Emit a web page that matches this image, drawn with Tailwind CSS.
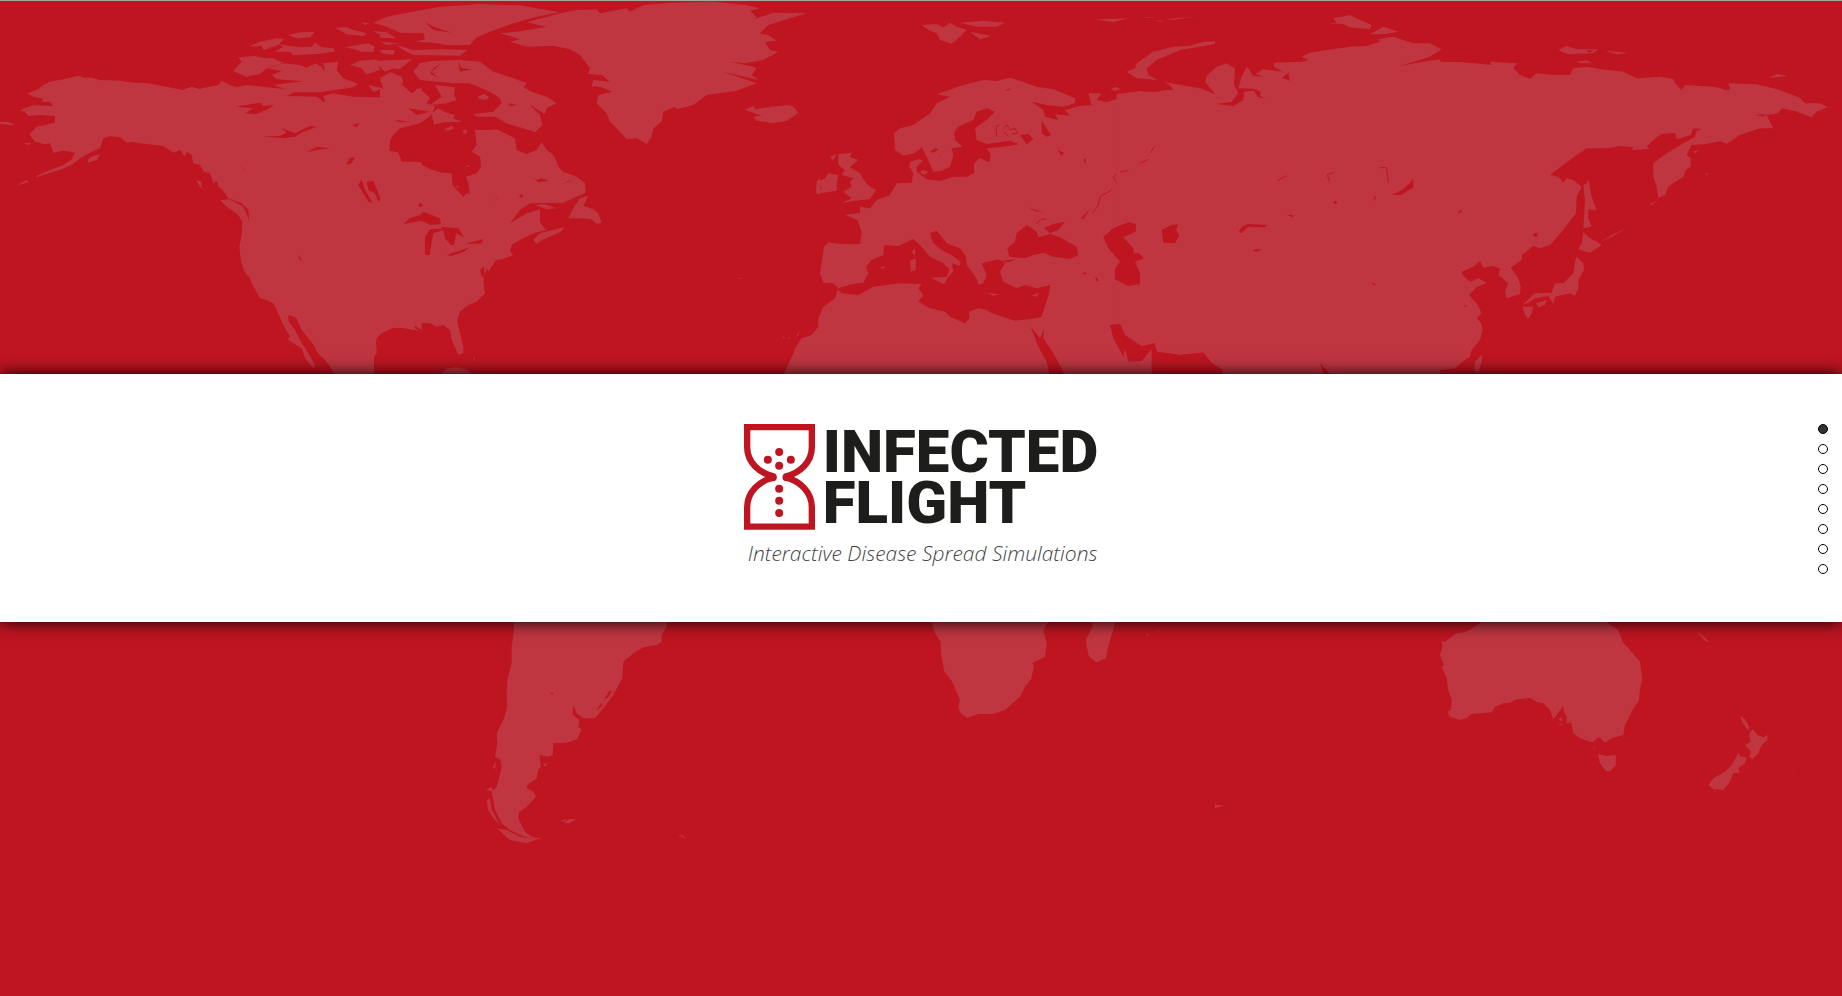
<!DOCTYPE html>
<html lang="en">
<head>
    <meta charset="UTF-8">
    <meta name="viewport" content="width=device-width, initial-scale=1.0">
    <title>Infected Flight</title>
    <script src="https://cdn.jsdelivr.net/npm/@tailwindcss/browser@4"></script>
</head>
<body class="bg-[#be1521]">
    <main class="relative flex min-h-screen flex-col justify-center overflow-hidden">

        <!-- World map -->
        <svg class="absolute inset-0 h-full w-full" viewBox="0 0 5526 2988" preserveAspectRatio="xMidYMid slice" fill="#bf3641" aria-hidden="true">
            <!-- North America, west -->
            <g>
                <path d="M82,280L115,268 130,255 150,245 190,238 235,227 255,234 270,232 300,240 360,242 400,248 440,249 500,260 548,270 575,260 600,268 640,250 605,265 655,255 665,242 690,255 710,262 740,255 800,262 860,268 885,275 860,288 950,290 975,308 970,288 1000,280 1060,290 1120,292 1150,292 1155,305 1165,285 1200,265 1235,280 1265,262V360L1225,375 1190,390 1170,420 1168,452 1195,458 1205,485 1265,487V990L1245,978 1235,990 1220,983 1180,983 1145,1000 1130,1015 1128,1030 1130,1060 1122,1070V1125H1005L990,1100 975,1080 950,1055 945,1040 925,1015 905,990 890,955 865,945 866,965 885,990 900,1020 925,1060 945,1095 940,1105 915,1075 905,1045 880,1030 862,1018 870,1010 850,975 830,930 820,910 800,900 780,895 760,860 750,835 733,815 722,780 718,740 726,700 727,665 715,645 680,620 660,600 690,598 730,620 748,662 745,630 725,610 685,595 668,570 655,560 652,545 640,548 630,520 612,515 600,495 580,490 575,465 560,455 555,470 540,450 520,458 490,438 440,432 415,430 400,425 380,428 360,412 330,408 310,415 300,445 275,455 240,475 215,495 180,510 150,518 110,532 108,528 150,510 190,495 215,478 225,458 190,452 160,458 150,430 135,433 105,425 88,403 110,380 165,368 165,348 120,345 85,348 75,335 60,330 100,316 160,318 150,306 125,305 130,297 100,290Z"/>
                <path d="M262,480L275,470 300,462 290,480 265,488Z M47,558L80,540 85,547 65,552Z M0,366L25,366 47,374 30,375 0,371Z M70,430L95,428 85,436Z M588,540L605,545 603,560 617,574 600,562Z"/>
                <path d="M700,213L725,185 715,172 765,168 795,175 820,175 850,188 800,205 780,222 740,230Z M803,205L850,190 900,195 920,203 945,190 965,200 975,218 970,190 1015,185 1010,210 1030,235 1075,252 1060,262 1020,268 960,277 880,277 840,262 820,255 910,244 830,238 815,225 845,213Z"/>
                <path d="M745,140L780,125 830,115 852,117 835,135 790,150 785,138Z M825,155L850,140 835,133 900,142 935,140 945,128 965,142 1000,145 1005,155 950,162 880,166 870,155Z M865,105L900,97 945,95 930,112 890,115Z M1005,83L1040,82 1060,90 1100,100 1090,108 1040,103Z M1035,142L1070,135 1105,130 1125,140 1120,155 1085,155 1060,148Z M1050,195L1080,182 1130,178 1140,210 1100,223 1085,205Z M1155,182L1235,178 1200,208 1165,205Z M1140,235L1170,217 1205,230 1210,245 1175,262 1150,250Z M1117,92L1165,98 1150,108Z M1105,255L1150,265 1120,277Z M1085,67L1107,70 1095,75Z"/>
                <g fill="#be1521">
                    <path d="M707,320L780,308 790,318 822,315 800,330 765,343 735,340 760,325Z M790,409L840,408 860,398 845,385 885,400 930,378 950,381 910,395 885,410 850,415Z M920,457L950,440 990,445 950,450Z M1038,495L1048,475 1065,472 1055,490Z M1057,375L1078,368 1070,382Z M1075,555L1085,538 1095,570 1118,608 1105,605Z M1100,545L1120,543 1143,600 1135,605 1125,580 1105,570Z M1160,630L1178,620 1175,633Z M893,766L905,778 900,782Z M1210,672L1235,655 1262,643V672Z M720,497L738,515 730,510Z"/>
                    <path d="M1183,360L1262,362 1230,378Z M1220,325L1262,328V336Z"/>
                </g>
            </g>

            <!-- North America, east and Greenland -->
            <g transform="translate(1140 0)">
                <path d="M0,270L20,262 40,260 60,250 90,275 100,285 110,265 130,275 150,295 140,310 165,318 155,345 120,370 60,385 30,415 27,452 55,458 65,485 110,485 150,508 185,518 215,520 218,555 240,580 250,590 262,578 270,585 265,550 258,530 290,520 303,500 300,470 275,455 290,435 285,390 330,390 350,388 375,400 405,415 410,450 440,462 470,450 485,427 500,450 520,465 530,485 535,500 550,515 590,530 615,548 617,578 590,590 550,608 450,610 420,630 390,670 440,640 480,628 490,640 480,665 500,690 460,700 410,725 395,735 390,755 400,765 345,785 325,815 320,805 310,845 315,880 290,905 265,915 240,935 232,960 240,1000 250,1040 250,1060 235,1064 215,1020 210,990 190,975 170,980 150,970 130,968 95,975 115,992 90,988 60,983 30,983 0,1003Z"/>
                <path d="M100,215L120,190 160,182 240,180 300,185 340,215 400,235 440,250 430,262 455,275 500,290 530,310 500,325 495,342 450,315 480,345 487,375 465,397 430,385 380,370 345,350 290,350 280,342 340,335 365,310 360,295 330,275 290,258 265,250 220,250 170,245 120,240Z"/>
                <path d="M-20,68L20,50 80,38 180,20 300,12 420,16 540,37 480,48 400,70 330,95 290,112 270,135 200,135 160,128 105,125 135,118 130,100 60,98 20,80Z M48,135L100,150 180,148 262,150 240,167 100,165 70,150Z M0,125L60,130 20,135Z M0,150L45,150 40,165 5,160Z M-20,182L90,180 40,205 15,215Z M0,240L40,220 70,250 40,275 10,265Z M0,95L20,97 50,115 0,113Z"/>
                <path d="M155,340L175,325 200,338 225,345 220,355 245,365 190,367 162,374Z M293,290L310,282 328,290 318,300 300,298Z M193,388L215,378 222,385 205,392Z M247,392L258,388 262,398 252,402Z M165,255L225,262 222,285 230,300 200,310 150,315 185,290Z"/>
                <path d="M565,655L580,625 600,595 625,587 610,618 640,628 655,640 665,668 650,672 635,658 600,655Z M460,720L480,700 545,683 555,680 540,697 485,720 470,732Z M462,614L495,613 528,625 500,627Z"/>
                <path d="M360,100L430,92 500,80 440,67 530,42 590,30 650,28 660,40 740,25 750,35 790,15 880,8 1000,5 1100,15 1140,25 1110,33 1130,50 1120,58 1180,38 1280,40 1220,58 1165,75 1140,100 1165,105 1190,122 1155,125 1170,150 1195,155 1150,180 1095,190 1050,185 1120,200 1130,205 1115,225 1135,240 1030,215 1130,250 1070,272 980,285 940,315 890,328 885,320 850,335 845,365 820,385 815,410 800,432 770,415 740,417 710,385 690,365 680,340 650,310 655,285 695,275 665,262 635,258 640,240 690,245 665,225 625,222 630,205 600,165 570,148 520,137 440,140 390,125 420,118Z"/>
                <path d="M1095,330L1120,317 1125,328 1160,322 1190,325 1215,315 1240,320 1255,338 1220,362 1180,370 1130,362 1120,350 1145,347Z M1070,834L1085,833 1080,837Z M1310,545L1320,535V585L1308,578Z M185,1122L200,1106 225,1102 260,1108 275,1122Z M278,1065L288,1085 282,1080Z"/>
                <g fill="#be1521">
                    <path d="M70,672L90,655 120,645 130,635 180,655 183,672 150,675 125,662Z M135,765L135,710 150,688 235,683 252,712 228,700 222,735 212,735 195,715 190,690 160,700 152,745 150,765Z M200,765L270,742 250,755 215,768Z M255,733L310,717 305,730Z M182,680L235,685 190,690Z"/>
                    <path d="M480,630L530,628 540,640 515,650 545,672 520,690 495,688 480,665Z M417,585L430,583 425,595Z M455,530L470,540 485,535 505,542 475,547Z M550,553L590,533 560,545Z M340,605L360,590 348,597Z M115,615L122,608 130,617 120,622Z M300,810L312,800 315,835 305,830Z M85,325L150,335 110,345Z M45,360L95,365 60,367Z M160,205L185,188 155,215 175,235 150,220Z M235,183L245,205 275,208 240,215Z M135,65L160,80 215,98 160,90Z M345,780L370,776 350,783Z M390,310L410,315 385,318Z"/>
                </g>
                <path d="M255,502L265,495 268,500Z M225,557L240,560 232,563Z"/>
            </g>

            <!-- Europe and north Africa -->
            <g transform="translate(2310 0)">
                <path d="M40,1125L70,1060 75,1045 95,1015 125,1005 145,980 145,955 160,920 195,895 205,865 190,850 160,848 150,820 162,740 175,727 210,732 270,733 275,695 262,660 225,645 270,638 270,620 300,625 320,600 360,585 380,550 425,548 430,520 418,500 420,485 440,480 455,445 432,460 400,467 375,450 372,400 390,385 430,375 480,340 500,310 540,290 500,283 530,272 580,255 640,240 680,243 720,233 760,245 800,260 850,268 880,280 915,295 915,310 880,320 830,315 785,305 820,330 825,350 865,360 855,343 900,347 885,330 930,318 965,315 955,280 995,280 980,300 1010,307 1050,293 1090,280 1105,272 1145,280V1125Z"/>
                <path d="M215,610L245,595 220,575 245,560 240,545 250,535 215,525 225,510 205,495 205,462 245,458 240,470 265,480 240,502 270,520 285,545 300,560 318,570 300,598 250,602Z M138,582L155,565 142,545 165,535 175,520 205,525 200,550 200,572Z M455,75L500,72 520,82 540,68 560,80 590,90 570,110 545,131 510,120 500,100 475,90Z M570,68L640,62 705,68 680,80 620,80Z M600,95L665,108 630,118Z M978,58L1030,57 1075,54 1030,67Z M1022,268L1035,260 1053,267 1035,273Z M180,470L200,462 188,482Z M0,42L105,40 40,58 0,72Z M0,320L60,316 85,338 50,362 0,370Z M40,1008L45,1015 38,1012Z M53,1013L60,1013 57,1018Z M80,1005L90,993 83,1008Z"/>
                <g fill="#be1521">
                    <path d="M432,478L455,440 470,470 490,515 515,513 540,500 550,465 545,445 578,440 555,420 553,395 565,380 610,360 620,335 650,325 675,335 650,360 615,385 620,420 650,432 720,422 747,433 700,440 650,445 662,465 658,487 630,475 612,490 612,520 590,530 550,530 510,543 470,538 440,515 440,500 460,480Z"/>
                    <path d="M203,868L213,862 250,852 280,848 295,820 288,800 305,780 340,765 342,735 385,738 430,717 470,750 490,730 478,700 500,692 530,730 570,745 587,768 590,795 620,835 625,855 640,850 650,825 635,790 685,778 705,790 690,815 700,845 740,865 765,855 800,865 840,855 837,880 815,950 780,958 735,962 665,940 650,930 625,925 597,935 598,955 585,970 540,950 525,935 480,925 445,905 460,885 445,865 455,852 390,850 310,860 265,885 215,880Z"/>
                    <path d="M740,700L770,675 785,685 800,695 805,712 840,702 870,712 920,740 925,765 900,777 850,770 820,758 790,765 765,775 718,770 712,745 735,725Z M822,685L850,672 885,665 865,690 840,700Z M690,783L740,778 715,787Z"/>
                    <path d="M782,980L810,1015 822,988 820,1015 850,1060 885,1125H840L830,1085 805,1040Z M750,405L775,402 790,418 770,433Z M815,362L830,385 843,405 830,410 815,400Z M480,455L495,445 507,448 490,458Z M508,472L518,455 512,468Z M862,450L882,458 875,467Z M935,822L950,815 948,823Z M975,828L987,842 980,845Z M705,272L725,263 715,272Z M940,478L947,475 948,492Z M775,622L825,640 795,633Z M932,655L960,628 940,657Z"/>
                    <path fill="none" stroke="#be1521" stroke-width="3" d="M680,410L678,380 688,375M700,385L712,375 720,390 735,385 742,400 725,402M700,395L715,408M1075,512L1045,518 1030,530 1040,550M1025,570L990,590 985,615 968,640M800,670L815,657 828,658"/>
                </g>
                <path d="M425,712L480,698 485,725 515,750 545,765 572,785 570,797 545,790 550,815 530,835 538,808 520,790 480,770 450,735Z M482,833L535,830 522,853Z M420,782L437,775 437,810 422,815Z M425,755L435,745 435,768Z M650,878L690,883 670,887Z M782,887L808,878 800,890Z M330,802L345,798 338,808Z M455,510L475,515 465,525 450,518Z M612,825L640,830 630,850Z"/>
            </g>

            <!-- Russia and central Asia -->
            <g transform="translate(3360 0)">
                <path d="M-10,282L50,275 110,275 140,270 160,270 150,255 130,245 200,258 240,265 285,282 255,245 262,225 290,200 320,190 345,205 360,240 380,200 400,225 430,208 490,215 462,200 462,188 550,185 565,180 545,170 570,158 620,150 690,140 740,138 780,125 775,118 820,110 865,125 880,130 930,130 965,148 930,170 840,198 900,187 960,178 963,190 1030,187 1060,195 1145,200V780H1085L1060,800 1025,815 1030,828 1050,845 1075,835 1100,848 1070,862 1047,885 1070,910 1085,940 1070,955 1083,968 1088,990 1080,1020 1055,1050 1050,1070 1035,1080 1005,1105 960,1110V1125H310L305,1108 275,1090 250,1058 180,1065 110,1055 100,1030 70,1040 20,1010 -10,970Z"/>
                <path d="M20,215L45,205 50,190 100,155 160,140 210,137 250,125 285,124 285,132 230,142 180,150 110,180 80,205 85,225 112,240 50,235Z M625,70L650,68 640,55 690,45 720,60 755,75 750,88 690,82 670,72Z M750,103L790,80 835,95 800,102Z M68,50L110,54 85,54Z M140,58L232,49 160,60Z M108,62L135,62 120,66Z"/>
                <g fill="#be1521">
                    <path d="M345,205L360,220 362,240 355,265 400,266 422,275 420,288 435,295 415,292 400,272 372,275 370,300 340,318 290,312 335,306 355,280 342,255Z M390,215L400,220 430,230 400,228Z M485,235L505,218 510,243 498,238Z"/>
                    <path d="M-50,710L-20,685 25,667 48,672 47,695 10,712 40,745 42,762 55,758 72,775 45,785 60,820 60,852 25,858 -15,838 -15,805 0,785 -35,745Z"/>
                    <path d="M-30,975L0,972 15,1005 65,1038 105,1030 110,1055 180,1065 250,1058 275,1090 308,1110V1125H150L125,1095 100,1070 97,1045 65,1083 25,1085 15,1045 10,1070 -20,1015Z"/>
                    <path d="M125,690L155,675 175,673 168,690 178,705 165,730 130,728Z M357,695L365,680 385,672 441,675 435,682 385,680 365,700Z M397,750L427,746 410,756Z M907,510L905,530 888,558 862,572 845,584 815,585 850,568 875,543 893,518Z M640,607L647,602 653,608 645,613Z M762,605L763,587 768,590Z M752,848L767,852 765,857Z M1015,637L1025,627 1027,631Z M500,645L522,653 505,630 515,645Z M600,1088L632,1125H612Z"/>
                    <path fill="none" stroke="#be1521" stroke-width="3" d="M780,503L800,503 805,548M628,543L622,525 642,516M472,542L500,527M60,490L85,478M92,458L102,440M0,517L25,511"/>
                </g>
            </g>

            <!-- Far East -->
            <g transform="translate(4260 0)">
                <path d="M-20,190L60,185 130,187 215,195 210,185 290,190 280,205 300,225 330,237 350,220 400,225 450,225 460,205 500,200 540,207 610,215 650,235 720,230 760,237 765,250 785,270 795,255 880,260 930,270 925,250 1010,253 1080,270 1140,293 1155,310 1200,310 1222,322 1190,335 1175,352 1130,335 1085,325 1075,340 1040,345 1060,385 1020,385 960,405 920,432 900,423 860,432 815,435 800,465 812,475 812,500 797,510 790,530 765,545 745,560 735,585 715,593 710,560 700,530 700,490 740,460 790,430 825,410 830,393 845,387 820,385 812,405 770,418 765,398 725,402 700,420 680,440 690,447 635,450 640,442 600,438 560,445 500,445 470,465 430,495 390,525 415,530 430,548 440,535 460,540 485,560 470,590 468,640 430,690 390,735 360,745 340,738 305,765 305,780 272,803 295,835 302,860 300,883 260,895 255,875 265,850 235,825 240,805 215,797 190,805 180,780H-20Z"/>
                <path d="M490,555L500,550 505,538 515,590 530,630 505,628 505,655 515,680 490,685 495,600Z M490,697L510,715 530,725 545,735 510,758 475,748 485,730Z M470,770L490,790 492,810 475,840 475,865 465,887 450,880 405,890 400,912 385,888 345,895 325,908 307,915 345,880 395,878 405,850 430,850 460,820 465,785Z M307,920L340,920 335,940 325,957 315,945Z M348,910L380,900 375,915 355,922Z M165,1085L187,1063 185,1085 175,1118 163,1110Z"/>
                <path d="M415,150L440,138 470,148 535,148 520,160 445,163Z M555,152L625,158 590,163Z M470,185L500,180 517,190 480,190Z M1047,233L1070,222 1105,228Z M540,725L580,703 620,685 575,710Z M820,455L835,449 825,460Z M690,612L715,600 695,615Z M855,517L865,523 862,527Z"/>
                <path fill="#be1521" d="M340,700L353,698 352,710 343,711Z M885,255L930,260 920,272Z M132,918L142,915 137,922Z M113,637L127,627 120,640Z M500,150L525,153 505,158Z M1005,344L1040,343 1030,350Z"/>
            </g>

            <!-- South America -->
            <g transform="translate(1410 1830)">
                <path d="M132,20V60L125,110 125,160 112,210 110,250 112,290 100,330 80,370 82,400 75,440 92,450 95,475 80,530 65,545 75,600 95,640 120,660 150,675 190,688 220,688 185,680 165,665 152,640 145,625 148,605 170,590 198,560 190,545 170,535 172,525 200,505 205,480 213,470 208,435 235,440 248,435 250,400 290,398 320,388 335,360 325,350 328,330 308,315 310,285 320,310 340,325 375,325 400,295 430,255 457,205 460,155 490,130 520,112 560,105 575,95 575,75 590,50V20Z"/>
                <path d="M48,540L65,530 70,545Z M68,470L78,452 75,478Z M50,570L60,565 65,600 90,645 70,625 55,600Z M80,655L110,660 150,680 200,688 170,700 120,690Z M218,463L230,460 228,470Z M270,633L290,627 285,635Z M283,640L295,628 318,627 298,640Z M620,673L640,678 650,688Z"/>
                <path fill="#be1521" d="M380,300L395,278 397,288Z M402,268L420,240 425,245 412,265Z M240,248L250,248 247,254Z"/>
            </g>

            <!-- Southern Africa and Madagascar -->
            <g transform="translate(2730 1830)">
                <path d="M60,20L75,70 92,95 93,130 103,185 127,215 150,270 145,292 152,310 172,324 205,312 250,312 285,300 330,260 345,230 363,208 372,170 367,158 405,140 410,100 400,60 415,35V20Z M542,20L547,50 528,90 530,110 537,140 560,157 587,145 595,110 615,40V20Z M708,73L716,73 714,80Z M742,58L747,60 744,66Z M915,578L920,586 942,586 930,591 915,594Z"/>
            </g>

            <!-- Australia and New Zealand -->
            <g transform="translate(4260 1830)">
                <path d="M200,20L180,40 140,65 110,70 75,95 65,92 68,110 60,135 72,165 65,170 80,205 85,240 95,270 93,300 83,305 90,320 120,330 140,325 155,312 215,307 225,290 250,280 270,278 290,268 330,264 350,275 370,280 390,300 400,328 430,287 432,305 440,320 440,340 453,337 460,370 480,385 517,397 537,380 555,398 575,385 610,375 615,345 635,305 657,270 660,235 667,210 660,155 625,115 608,95 595,60 570,45 550,20Z"/>
                <path d="M533,432L560,438 587,434 588,465 570,484 558,484 540,460Z M828,62L845,75 870,97 855,92Z M410,343L428,341 430,346Z M415,330L425,322 428,332Z M520,412L525,414 522,420Z M960,318L975,328 988,350 985,362 968,340Z M998,357L1012,375 1030,382 1043,375 1042,390 1023,408 1015,430 997,447 988,440 993,425 975,405 992,395 987,372Z M955,430L962,440 980,440 975,460 955,475 960,487 940,490 930,515 910,540 880,537 865,525 880,505 915,485 935,465Z M882,542L888,545 885,548Z M1118,488L1124,488 1121,492Z"/>
            </g>
        </svg>
        <div class="absolute inset-x-0 top-0 h-px bg-[#a5a5a5]"></div>

        <!-- Title band -->
        <header class="relative flex justify-center bg-white pt-[50px] pb-[53px] shadow-[0_0_16px_#000]">
            <div>
                <div class="flex gap-2">
                    <svg class="h-[106px] w-[71px]" viewBox="0 0 212 318" aria-hidden="true">
                        <g fill="none" stroke="#be1521" stroke-width="19">
                            <path d="M89,158C45,147 9,115 9,70V9H203V70C203,115 167,147 124,158"/>
                            <path d="M89,160C45,170 9,205 9,250V308H203V250C203,205 167,170 124,160"/>
                        </g>
                        <g fill="#be1521">
                            <circle cx="86" cy="160" r="12"/>
                            <circle cx="127" cy="160" r="12"/>
                            <circle cx="105" cy="84" r="12"/>
                            <circle cx="71" cy="107" r="12"/>
                            <circle cx="140" cy="107" r="12"/>
                            <circle cx="105" cy="125" r="12"/>
                            <circle cx="105" cy="194" r="12"/>
                            <circle cx="105" cy="230" r="12"/>
                            <circle cx="105" cy="267" r="12"/>
                        </g>
                    </svg>
                    <h1 class="pt-[2px] font-['Roboto',sans-serif] text-[60px] leading-[51px] font-black text-[#1d1d1b]">INFECTED<br>FLIGHT</h1>
                </div>
                <p class="mt-2 pl-1 font-['Open_Sans',sans-serif] text-[21px] leading-[31px] font-light text-[#444] italic">Interactive Disease Spread Simulations</p>
            </div>
        </header>

        <!-- Section navigation -->
        <nav class="absolute inset-y-0 right-[14px] flex items-center pt-[2px]" aria-label="Sections">
            <ul class="flex flex-col gap-[10px]">
                <li><a href="#intro" aria-label="Section 1" class="block size-[10px] rounded-full border border-black bg-[#333]"></a></li>
                <li><a href="#section2" aria-label="Section 2" class="block size-[10px] rounded-full border border-black"></a></li>
                <li><a href="#section3" aria-label="Section 3" class="block size-[10px] rounded-full border border-black"></a></li>
                <li><a href="#section4" aria-label="Section 4" class="block size-[10px] rounded-full border border-black"></a></li>
                <li><a href="#section5" aria-label="Section 5" class="block size-[10px] rounded-full border border-black"></a></li>
                <li><a href="#section6" aria-label="Section 6" class="block size-[10px] rounded-full border border-black"></a></li>
                <li><a href="#section7" aria-label="Section 7" class="block size-[10px] rounded-full border border-black"></a></li>
                <li><a href="#section8" aria-label="Section 8" class="block size-[10px] rounded-full border border-black"></a></li>
            </ul>
        </nav>
    </main>
</body>
</html>
